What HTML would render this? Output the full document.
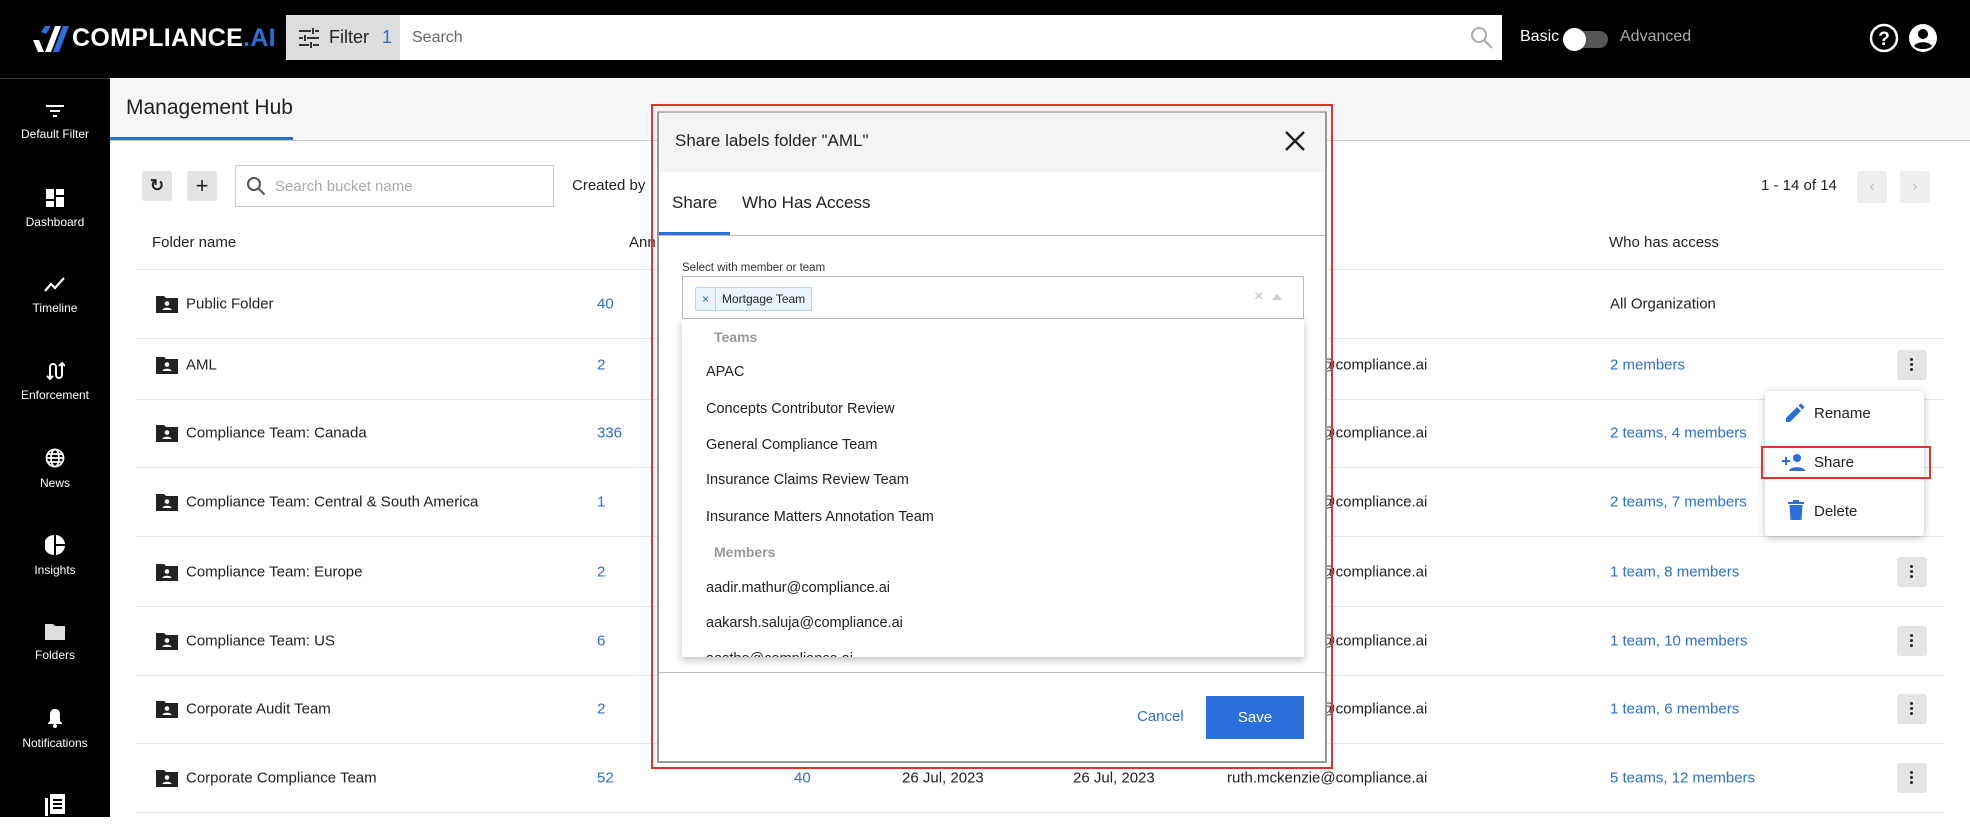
<!DOCTYPE html>
<html><head><meta charset="utf-8"><style>
*{box-sizing:border-box;margin:0;padding:0}
body{width:1970px;height:817px;overflow:hidden;position:relative;background:#fff;font-family:"Liberation Sans",sans-serif;color:#222;font-size:15px}
.abs{position:absolute}
.top{left:0;top:0;width:1970px;height:78px;background:#000}
.side{left:0;top:78px;width:110px;height:739px;background:#000;border-top:1px solid #333}
.si{position:absolute;left:0;width:110px;text-align:center;color:#fff;font-size:12px}
.si svg{display:block;margin:0 auto 8px}
.blue{color:#2a6fdb}
.row{position:absolute;left:136px;width:1808px;height:69px;border-bottom:1px solid #e6e6e6}
.cell{position:absolute;top:50%;transform:translateY(-50%);white-space:nowrap}
.kb{position:absolute;left:1761px;width:30px;height:30px;background:#e4e4e4;border-radius:3px;top:50%;transform:translateY(-50%)}
.kb:before{content:"";position:absolute;left:13px;top:8px;width:3px;height:3px;background:#222;border-radius:50%;box-shadow:0 5px 0 #222,0 10px 0 #222}
.fi{position:absolute;left:20px;top:50%;transform:translateY(-50%)}
.dd div{position:absolute;left:24px;font-size:14.5px;color:#222}
</style></head><body>
<div class="abs top"></div>
<svg class="abs" style="left:31px;top:22px" width="40" height="32" viewBox="0 0 40 32"><path d="M2 18 L8 18 L13 30 L7 30Z" fill="#fff"/><path d="M14 30 L24 4 L30 4 L20 30Z" fill="#fff"/><path d="M22 30 L32 4 L38 4 L28 30Z" fill="#2a6fdb"/><path d="M10 10 L14 4 L20 4 L15 12Z" fill="#2a6fdb"/></svg>
<div class="abs" style="left:72px;top:24px;color:#fff;font-size:25px;font-weight:bold;letter-spacing:0.3px">COMPLIANCE<span class="blue">.AI</span></div>
<div class="abs" style="left:286px;top:15px;width:1216px;height:45px;background:#fff"></div>
<div class="abs" style="left:286px;top:15px;width:114px;height:45px;background:#ddd"></div>
<svg class="abs" style="left:298px;top:28px" width="22" height="20" viewBox="0 0 22 20" stroke="#333" stroke-width="2"><path d="M1 3h12M17 3h4M15 0v6M1 10h4M9 10h12M7 7v6M1 17h10M15 17h6M13 14v6"/></svg>
<div class="abs" style="left:329px;top:27px;font-size:18px;color:#222">Filter <span class="blue" style="margin-left:8px">1</span></div>
<div class="abs" style="left:412px;top:29px;font-size:16px;color:#666">Search</div>
<svg class="abs" style="left:1470px;top:26px" width="24" height="24" viewBox="0 0 24 24" stroke="#aaa" stroke-width="2" fill="none"><circle cx="9" cy="9" r="7"/><path d="M14 14l8 8"/></svg>
<div class="abs" style="left:1520px;top:28px;color:#fff;font-size:16px">Basic</div>
<div class="abs" style="left:1566px;top:31px;width:42px;height:17px;border-radius:9px;background:#555"></div>
<div class="abs" style="left:1563px;top:28px;width:23px;height:23px;border-radius:50%;background:#fff"></div>
<div class="abs" style="left:1620px;top:28px;color:#aaa;font-size:16px">Advanced</div>
<svg class="abs" style="left:1869px;top:23px" width="30" height="30" viewBox="0 0 30 30"><circle cx="15" cy="15" r="13" fill="none" stroke="#fff" stroke-width="2.5"/><text x="15" y="22" text-anchor="middle" fill="#fff" font-size="19" font-weight="bold" font-family="Liberation Sans">?</text></svg>
<svg class="abs" style="left:1908px;top:23px" width="30" height="30" viewBox="0 0 30 30"><circle cx="15" cy="15" r="14" fill="#fff"/><circle cx="15" cy="11" r="5" fill="#000"/><path d="M6 23c3-5 15-5 18 0c-4 4-14 4-18 0z" fill="#000"/></svg>

<div class="abs side"></div>
<div class="si" style="top:103px"><svg width="18" height="16" viewBox="0 0 18 16" fill="#fff"><rect x="0" y="2" width="18" height="2"/><rect x="4" y="7" width="10" height="2"/><rect x="7" y="12" width="4" height="2"/></svg>Default Filter</div>
<div class="si" style="top:189px"><svg width="18" height="18" viewBox="0 0 18 18" fill="#fff"><rect x="0" y="0" width="8" height="10"/><rect x="10" y="0" width="8" height="6"/><rect x="0" y="12" width="8" height="6"/><rect x="10" y="8" width="8" height="10"/></svg>Dashboard</div>
<div class="si" style="top:277px"><svg width="22" height="16" viewBox="0 0 22 16" fill="none" stroke="#fff" stroke-width="2.2"><path d="M1 14l6-7 4 4 9-10"/></svg>Timeline</div>
<div class="si" style="top:362px"><svg width="20" height="18" viewBox="0 0 20 18" fill="none" stroke="#fff" stroke-width="2"><path d="M5 17V5a3 3 0 016 0v8a3 3 0 006 0V1M2 14l3 3 3-3M14 4l3-3 3 3"/></svg>Enforcement</div>
<div class="si" style="top:448px"><svg width="20" height="20" viewBox="0 0 20 20" fill="none" stroke="#fff" stroke-width="1.8"><circle cx="10" cy="10" r="8.5"/><ellipse cx="10" cy="10" rx="4" ry="8.5"/><path d="M1.5 10h17M3 6h14M3 14h14"/></svg>News</div>
<div class="si" style="top:535px"><svg width="20" height="20" viewBox="0 0 20 20" fill="#fff"><path d="M9 0v20A10 10 0 019 0z"/><path d="M11 0a10 10 0 019 9h-9z"/><path d="M11 11h9a10 10 0 01-9 9z"/></svg>Insights</div>
<div class="si" style="top:622px"><svg width="20" height="18" viewBox="0 0 20 18" fill="#ddd"><path d="M0 2h8l2 2h10v14H0z"/></svg>Folders</div>
<div class="si" style="top:708px"><svg width="16" height="20" viewBox="0 0 16 20" fill="#fff"><path d="M8 1c4 0 5 3 5 6v6l2 2v1H1v-1l2-2V7c0-3 1-6 5-6z"/><circle cx="8" cy="18" r="2"/></svg>Notifications</div>
<div class="si" style="top:794px"><svg width="20" height="22" viewBox="0 0 20 22" fill="#fff"><rect x="0" y="4" width="3" height="18"/><rect x="5" y="0" width="15" height="20"/><rect x="8" y="5" width="9" height="2" fill="#000"/><rect x="8" y="9" width="9" height="2" fill="#000"/><rect x="8" y="13" width="9" height="2" fill="#000"/></svg></div>

<div class="abs" style="left:110px;top:78px;width:1860px;height:63px;background:#f6f6f6;border-bottom:1px solid #ccc"></div>
<div class="abs" style="left:126px;top:96px;font-size:21px;color:#222">Management Hub</div>
<div class="abs" style="left:110px;top:137px;width:183px;height:3px;background:#2a6fdb"></div>

<div class="abs" style="left:142px;top:171px;width:30px;height:30px;background:#e4e4e4;border-radius:3px;text-align:center;line-height:30px;font-size:17px;font-weight:bold">&#x21bb;</div>
<div class="abs" style="left:187px;top:171px;width:30px;height:30px;background:#e4e4e4;border-radius:3px;text-align:center;line-height:29px;font-size:22px">+</div>
<div class="abs" style="left:235px;top:165px;width:319px;height:42px;border:1px solid #ccc"></div>
<svg class="abs" style="left:246px;top:176px" width="20" height="20" viewBox="0 0 20 20" stroke="#555" stroke-width="2" fill="none"><circle cx="8" cy="8" r="6"/><path d="M12.5 12.5l6 6"/></svg>
<div class="abs" style="left:275px;top:178px;color:#aaa;font-size:15px">Search bucket name</div>
<div class="abs" style="left:572px;top:177px;font-size:15px">Created by</div>
<div class="abs" style="left:1761px;top:177px;font-size:15px">1 - 14 of 14</div>
<div class="abs" style="left:1857px;top:171px;width:30px;height:32px;background:#eee;border-radius:3px;color:#bbb;text-align:center;line-height:32px">&#8249;</div>
<div class="abs" style="left:1900px;top:171px;width:30px;height:32px;background:#eee;border-radius:3px;color:#bbb;text-align:center;line-height:32px">&#8250;</div>

<div class="abs" style="left:136px;top:269px;width:1808px;border-top:1px solid #e6e6e6"></div>
<div class="abs" style="left:152px;top:234px;font-size:15px">Folder name</div>
<div class="abs" style="left:629px;top:234px;font-size:15px">Ann</div>
<div class="abs" style="left:1609px;top:234px;font-size:15px">Who has access</div>

<svg width="0" height="0" style="position:absolute"><defs><symbol id="fo" viewBox="0 0 22 18"><path d="M0 1h8l2 2h12v15H0z" fill="#222"/><circle cx="11" cy="8.5" r="2.3" fill="#fff"/><path d="M6.5 15c0-3 9-3 9 0z" fill="#fff"/></symbol></defs></svg>

<div class="row" style="top:270px"><svg class="fi" width="22" height="18"><use href="#fo"/></svg><span class="cell" style="left:50px">Public Folder</span><span class="cell blue" style="left:461px">40</span><span class="cell" style="left:1474px">All Organization</span></div>
<div class="row" style="top:331px"><svg class="fi" width="22" height="18"><use href="#fo"/></svg><span class="cell" style="left:50px">AML</span><span class="cell blue" style="left:461px">2</span><span class="cell" style="left:1091px">ruth.mckenzie@compliance.ai</span><span class="cell blue" style="left:1474px">2 members</span><div class="kb"></div></div>
<div class="row" style="top:399px"><svg class="fi" width="22" height="18"><use href="#fo"/></svg><span class="cell" style="left:50px">Compliance Team: Canada</span><span class="cell blue" style="left:461px">336</span><span class="cell" style="left:1091px">ruth.mckenzie@compliance.ai</span><span class="cell blue" style="left:1474px">2 teams, 4 members</span></div>
<div class="row" style="top:468px"><svg class="fi" width="22" height="18"><use href="#fo"/></svg><span class="cell" style="left:50px">Compliance Team: Central &amp; South America</span><span class="cell blue" style="left:461px">1</span><span class="cell" style="left:1091px">ruth.mckenzie@compliance.ai</span><span class="cell blue" style="left:1474px">2 teams, 7 members</span></div>
<div class="row" style="top:538px"><svg class="fi" width="22" height="18"><use href="#fo"/></svg><span class="cell" style="left:50px">Compliance Team: Europe</span><span class="cell blue" style="left:461px">2</span><span class="cell" style="left:1091px">ruth.mckenzie@compliance.ai</span><span class="cell blue" style="left:1474px">1 team, 8 members</span><div class="kb"></div></div>
<div class="row" style="top:607px"><svg class="fi" width="22" height="18"><use href="#fo"/></svg><span class="cell" style="left:50px">Compliance Team: US</span><span class="cell blue" style="left:461px">6</span><span class="cell" style="left:1091px">ruth.mckenzie@compliance.ai</span><span class="cell blue" style="left:1474px">1 team, 10 members</span><div class="kb"></div></div>
<div class="row" style="top:675px"><svg class="fi" width="22" height="18"><use href="#fo"/></svg><span class="cell" style="left:50px">Corporate Audit Team</span><span class="cell blue" style="left:461px">2</span><span class="cell" style="left:1091px">ruth.mckenzie@compliance.ai</span><span class="cell blue" style="left:1474px">1 team, 6 members</span><div class="kb"></div></div>
<div class="row" style="top:744px"><svg class="fi" width="22" height="18"><use href="#fo"/></svg><span class="cell" style="left:50px">Corporate Compliance Team</span><span class="cell blue" style="left:461px">52</span><span class="cell blue" style="left:658px">40</span><span class="cell" style="left:766px">26 Jul, 2023</span><span class="cell" style="left:937px">26 Jul, 2023</span><span class="cell" style="left:1091px">ruth.mckenzie@compliance.ai</span><span class="cell blue" style="left:1474px">5 teams, 12 members</span><div class="kb"></div></div>

<div class="abs" style="left:1765px;top:391px;width:159px;height:145px;background:#fff;box-shadow:0 2px 8px rgba(0,0,0,.25);border-radius:3px"></div>
<svg class="abs" style="left:1785px;top:403px" width="20" height="20" viewBox="0 0 20 20" fill="#2a6fdb"><path d="M1 15v4h4L16 8l-4-4zM17.5 6.5l-4-4 1.5-1.5a1 1 0 011.4 0l2.6 2.6a1 1 0 010 1.4z"/></svg>
<div class="abs" style="left:1814px;top:405px;font-size:15px">Rename</div>
<div class="abs" style="left:1761px;top:446px;width:170px;height:33px;border:2px solid #e8302a"></div>
<svg class="abs" style="left:1782px;top:453px" width="24" height="18" viewBox="0 0 24 18" fill="#2a6fdb"><circle cx="15" cy="5" r="4"/><path d="M7 18c0-5 16-5 16 0z"/><rect x="0" y="7" width="8" height="2"/><rect x="3" y="4" width="2" height="8"/></svg>
<div class="abs" style="left:1814px;top:454px;font-size:15px">Share</div>
<svg class="abs" style="left:1788px;top:500px" width="16" height="20" viewBox="0 0 16 20" fill="#2a6fdb"><rect x="0" y="2" width="16" height="2"/><rect x="5" y="0" width="6" height="2"/><path d="M1.5 5h13l-1 15h-11z"/></svg>
<div class="abs" style="left:1814px;top:503px;font-size:15px">Delete</div>

<div class="abs" style="left:651px;top:104px;width:682px;height:665px;border:2px solid #e8302a"></div>
<div class="abs" style="left:657px;top:111px;width:670px;height:652px;background:#fff;border:2px solid #999;border-top-color:#bbb"></div>
<div class="abs" style="left:659px;top:113px;width:666px;height:59px;background:#f4f4f4"></div>
<div class="abs" style="left:675px;top:131px;font-size:17px">Share labels folder "AML"</div>
<svg class="abs" style="left:1285px;top:131px" width="20" height="20" viewBox="0 0 20 20" stroke="#222" stroke-width="2.4"><path d="M1 1l18 18M19 1L1 19"/></svg>
<div class="abs" style="left:672px;top:193px;font-size:17px">Share</div>
<div class="abs" style="left:742px;top:193px;font-size:17px">Who Has Access</div>
<div class="abs" style="left:659px;top:235px;width:666px;border-top:1px solid #bbb"></div>
<div class="abs" style="left:659px;top:232px;width:71px;height:3px;background:#2a6fdb"></div>
<div class="abs" style="left:682px;top:262px;font-size:11.5px;color:#333">Select with member or team</div>
<div class="abs" style="left:682px;top:276px;width:622px;height:43px;border:1px solid #bbb"></div>
<div class="abs" style="left:695px;top:287px;height:24px;border:1px solid #b8d4f5;background:#eaf3fe;border-radius:2px;font-size:12px;line-height:22px;white-space:nowrap;padding-right:6px"><span class="blue" style="display:inline-block;width:20px;text-align:center;border-right:1px solid #b8d4f5">×</span><span style="padding-left:6px">Mortgage Team</span></div>
<div class="abs" style="left:1254px;top:288px;color:#bbb;font-size:16px">×</div>
<svg class="abs" style="left:1272px;top:294px" width="10" height="6"><path d="M0 6L5 0L10 6z" fill="#ccc"/></svg>
<div class="abs dd" style="left:682px;top:319px;width:622px;height:338px;background:#fff;box-shadow:0 3px 8px rgba(0,0,0,.25);overflow:hidden">
<div style="left:32px;top:10px;color:#999;font-weight:bold;font-size:14px">Teams</div>
<div style="top:45px">APAC</div>
<div style="top:82px">Concepts Contributor Review</div>
<div style="top:118px">General Compliance Team</div>
<div style="top:153px">Insurance Claims Review Team</div>
<div style="top:190px">Insurance Matters Annotation Team</div>
<div style="left:32px;top:225px;color:#999;font-weight:bold;font-size:14px">Members</div>
<div style="top:261px">aadir.mathur@compliance.ai</div>
<div style="top:296px">aakarsh.saluja@compliance.ai</div>
<div style="top:332px">aasthe@compliance.ai</div>
</div>
<div class="abs" style="left:659px;top:672px;width:666px;border-top:1px solid #bbb"></div>
<div class="abs blue" style="left:1137px;top:708px;font-size:15px">Cancel</div>
<div class="abs" style="left:1206px;top:696px;width:98px;height:43px;background:#2a6fdb;color:#fff;text-align:center;line-height:43px;font-size:15px">Save</div>
</body></html>
